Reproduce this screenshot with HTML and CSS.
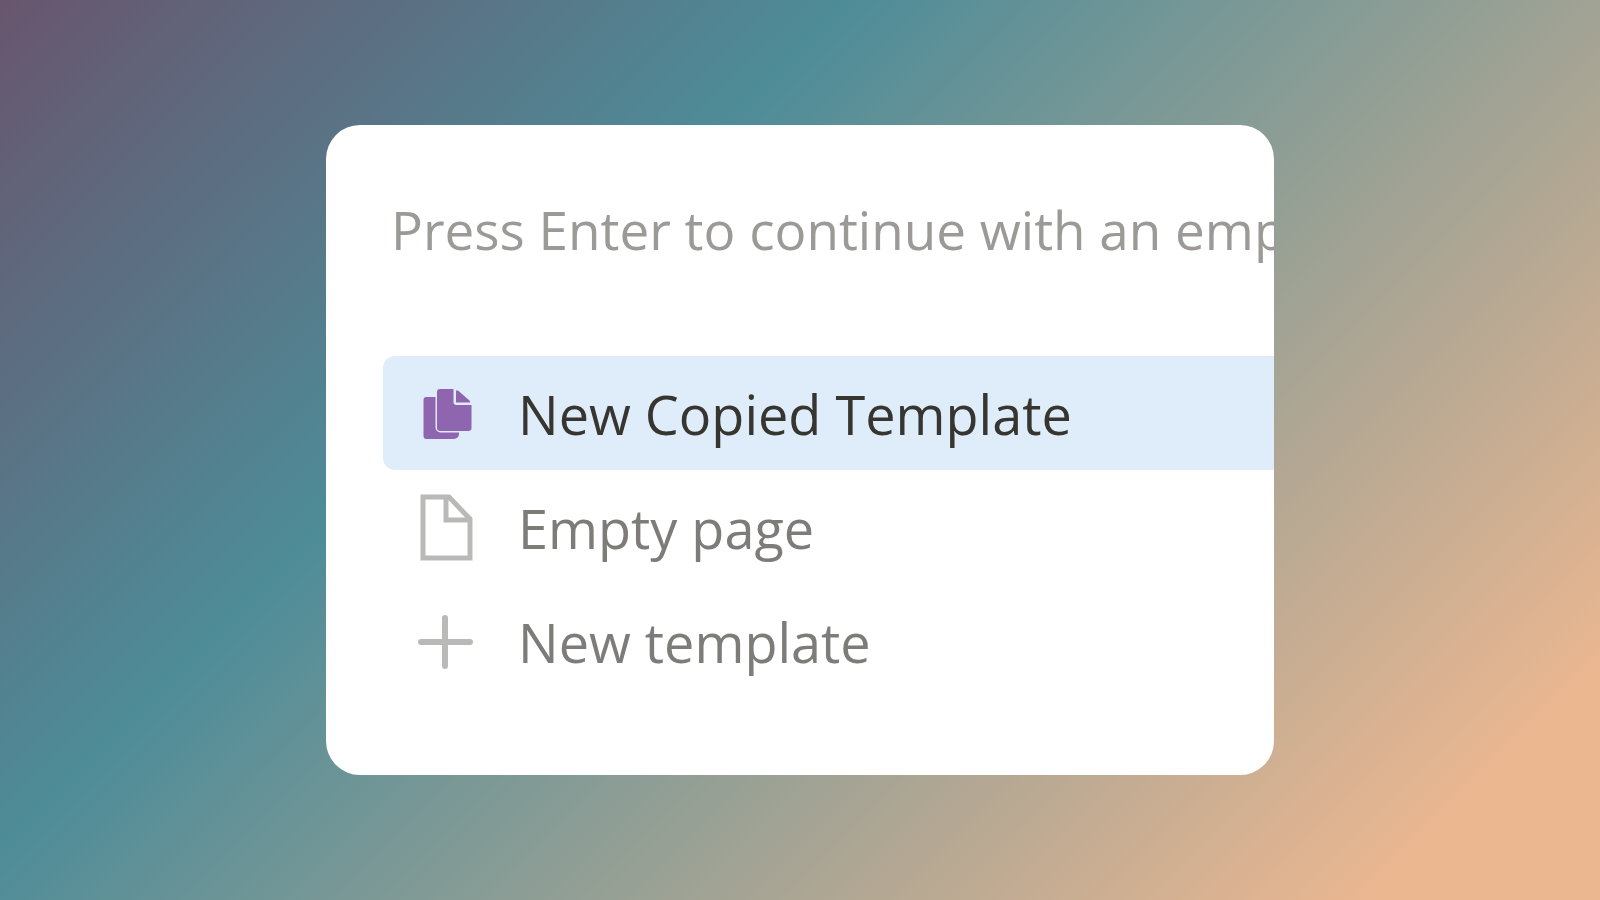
FILE: index.html
```html
<!DOCTYPE html>
<html lang="en">
  <head>
    <meta charset="UTF-8" />
    <meta name="viewport" content="width=device-width, initial-scale=1.0" />
    <title>New page</title>
    <link rel="stylesheet" href="styles.css">
  </head>
  <body>
    <main class="card">
      <p class="hint">Press Enter to continue with an emp</p>

      <ul class="menu">
        <li>
          <button type="button" class="menu-item selected">
            <svg class="icon" viewBox="0 0 56 70" aria-hidden="true">
              <path fill="#9065b0" d="M8.500 18h9v30.500a5 5 0 0 0 5 5H41v1.500a5 5 0 0 1-5 5H8.500a3 3 0 0 1-3-3V21a3 3 0 0 1 3-3z" />
              <path fill="#9065b0" d="M22 10H35.500v13a3 3 0 0 0 3 3h15v23a3 3 0 0 1-3 3H22a3 3 0 0 1-3-3V13a3 3 0 0 1 3-3z" />
              <path fill="#9065b0" d="M38 11.500h2L52 22v1.500H38z" />
            </svg>
            <span>New Copied Template</span>
          </button>
        </li>
        <li>
          <button type="button" class="menu-item">
            <svg class="icon" viewBox="0 0 56 70" aria-hidden="true">
              <path fill="none" stroke="#b9b9b7" stroke-width="5" d="M5 4h26l21 22v39H5zM28 4v23h24" />
            </svg>
            <span>Empty page</span>
          </button>
        </li>
        <li>
          <button type="button" class="menu-item">
            <svg class="icon" viewBox="0 0 56 70" aria-hidden="true">
              <path fill="none" stroke="#b9b9b7" stroke-width="6" stroke-linecap="round" d="M3 35h49M27 11v48" />
            </svg>
            <span>New template</span>
          </button>
        </li>
      </ul>
    </main>
  </body>
</html>
```
FILE: styles.css
```css
* {
  box-sizing: border-box;
}
body {
  margin: 0;
  min-height: 100vh;
  padding: 20px;
  display: flex;
  align-items: center;
  justify-content: center;
  font-family: "Segoe UI", "Open Sans", sans-serif;
  font-size: 54px;
  background: linear-gradient(135deg, #68556e 0%, #4e8c98 34%, #ebb791 91%);
}
.card {
  width: 100%;
  max-width: 948px;
  padding: 65px 0 77px 57px;
  background-color: #fff;
  border-radius: 34px;
  overflow: hidden;
}
.hint {
  margin: 0 0 86px;
  padding-left: 8px;
  font-size: 53px;
  line-height: 80px;
  color: #9b9a97;
  white-space: nowrap;
}
.menu {
  list-style: none;
  margin: 0;
  padding: 0;
}
.menu-item {
  display: flex;
  align-items: center;
  gap: 44px;
  width: 100%;
  height: 114px;
  padding: 2px 0 0 35px;
  border: none;
  border-radius: 12px 0 0 12px;
  background: none;
  font: inherit;
  color: #7d7c78;
  white-space: nowrap;
  cursor: pointer;
}
.menu-item.selected {
  background-color: #dfedfb;
  color: #37352f;
}
.icon {
  width: 56px;
  height: 70px;
  flex-shrink: 0;
}
```
